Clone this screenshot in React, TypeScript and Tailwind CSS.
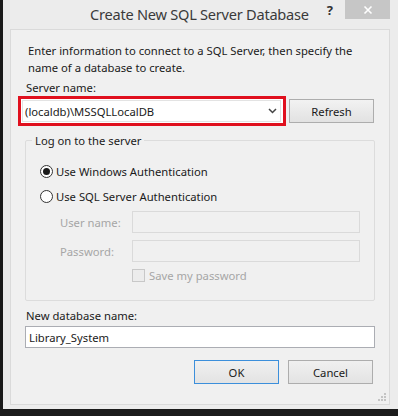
import React from "react";

const font = { fontFamily: '"Noto Sans", "Open Sans", sans-serif' };

function Radio({ checked }: { checked?: boolean }) {
  return (
    <span className="w-[13px] h-[13px] rounded-full border border-[#333333] bg-white flex items-center justify-center shrink-0">
      {checked ? <span className="w-[7px] h-[7px] rounded-full bg-[#1a1a1a]" /> : null}
    </span>
  );
}

export default function App() {
  return (
    <div className="w-[398px] h-[416px] bg-[#1b1b1b] pl-[3px] overflow-hidden" style={font}>
      <div className="h-[409px] bg-[#ececec] flex flex-col">
        {/* Title bar */}
        <div className="h-[29px] flex items-start shrink-0">
          <div className="ml-[87px] mt-[4px] text-[14.6px] tracking-[-0.25px] text-[#3a3a3a] leading-[20px] whitespace-nowrap">
            Create New SQL Server Database
          </div>
          <div className="ml-auto mt-[2px] mr-[12px] text-[13px] font-bold text-[#333] leading-[16px]">?</div>
          <div className="w-[45px] h-[19px] bg-[#c6c6c6] mr-[8px] flex items-center justify-center">
            <svg width="10" height="10" viewBox="0 0 10 10">
              <path d="M1.5 1.5 L8.5 8.5 M8.5 1.5 L1.5 8.5" stroke="#ffffff" strokeWidth="1.6" />
            </svg>
          </div>
        </div>

        {/* Panel */}
        <div className="ml-[7px] mr-[8px] h-[376px] border border-[#dadada] bg-[#f0f0f0] flex flex-col text-[11.25px] text-[#1a1a1a]">
          <div className="ml-[17px] mt-[12px] leading-[17px] w-[340px]">
            Enter information to connect to a SQL Server, then specify the name of a database to create.
          </div>
          <div className="ml-[15px] mt-[3px] leading-[17px]">Server name:</div>

          <div className="flex items-start">
            <div className="ml-[7px] w-[268px] h-[30px] border-[3px] border-[#e0101e] bg-white flex items-center">
              <div className="ml-[1px] w-[259px] h-[22px] border border-[#e3e3e3] flex items-center pl-[2px]">
                <span className="leading-[17px]">(localdb)\MSSQLLocalDB</span>
                <svg className="ml-auto mr-[3px]" width="9" height="6" viewBox="0 0 9 6">
                  <path d="M1 1 L4.5 4.5 L8 1" stroke="#444" strokeWidth="1.5" fill="none" />
                </svg>
              </div>
            </div>
            <div className="ml-[3px] mt-[3px] w-[85px] h-[24px] border border-[#adadad] bg-gradient-to-b from-[#f2f2f2] to-[#e2e2e2] flex items-center justify-center leading-[17px]">
              Refresh
            </div>
          </div>

          {/* Group box */}
          <fieldset className="ml-[14px] w-[350px] h-[169px] mt-[6px] border border-[#dcdcdc] rounded-[2px] px-0">
            <legend className="ml-[6px] px-[3px] leading-[17px]">Log on to the server</legend>
            <div className="flex items-center mt-[14px] ml-[14px] gap-[3px]">
              <Radio checked />
              <span className="leading-[17px]">Use Windows Authentication</span>
            </div>
            <div className="flex items-center mt-[8px] ml-[14px] gap-[3px]">
              <Radio />
              <span className="leading-[17px]">Use SQL Server Authentication</span>
            </div>
            <div className="flex items-center mt-[6px]">
              <span className="ml-[34px] w-[72px] text-[#a6a6a6] leading-[17px]">User name:</span>
              <div className="w-[228px] h-[22px] border border-[#dadada] bg-[#f0f0f0]" />
            </div>
            <div className="flex items-center mt-[7px]">
              <span className="ml-[34px] w-[72px] text-[#a6a6a6] leading-[17px]">Password:</span>
              <div className="w-[228px] h-[22px] border border-[#dadada] bg-[#f0f0f0]" />
            </div>
            <div className="flex items-center mt-[5px] ml-[106px] gap-[4px]">
              <span className="w-[13px] h-[13px] border border-[#c8c8c8] bg-[#ececec]" />
              <span className="text-[#a6a6a6] leading-[17px]">Save my password</span>
            </div>
          </fieldset>

          <div className="ml-[15px] mt-[6px] leading-[17px]">New database name:</div>
          <div className="ml-[14px] mt-[2px] w-[350px] h-[22px] border border-[#abadb3] bg-white flex items-center pl-[3px]">
            <span className="leading-[17px]">Library_System</span>
          </div>

          <div className="flex mt-[12px] ml-[183px] gap-[9px]">
            <div className="w-[85px] h-[24px] border border-[#3c8fdb] bg-gradient-to-b from-[#f0f0f0] to-[#e3e3e3] flex items-center justify-center leading-[17px]">
              OK
            </div>
            <div className="w-[85px] h-[24px] border border-[#adadad] bg-gradient-to-b from-[#f0f0f0] to-[#e3e3e3] flex items-center justify-center leading-[17px]">
              Cancel
            </div>
          </div>

          <div className="ml-auto mr-[3px] mt-auto mb-[3px]">
            <svg width="8" height="8" viewBox="0 0 8 8">
              <rect x="6" y="0" width="2" height="2" fill="#c4c4c4" />
              <rect x="3" y="3" width="2" height="2" fill="#c4c4c4" />
              <rect x="6" y="3" width="2" height="2" fill="#c4c4c4" />
              <rect x="0" y="6" width="2" height="2" fill="#c4c4c4" />
              <rect x="3" y="6" width="2" height="2" fill="#c4c4c4" />
              <rect x="6" y="6" width="2" height="2" fill="#c4c4c4" />
            </svg>
          </div>
        </div>
      </div>
    </div>
  );
}
